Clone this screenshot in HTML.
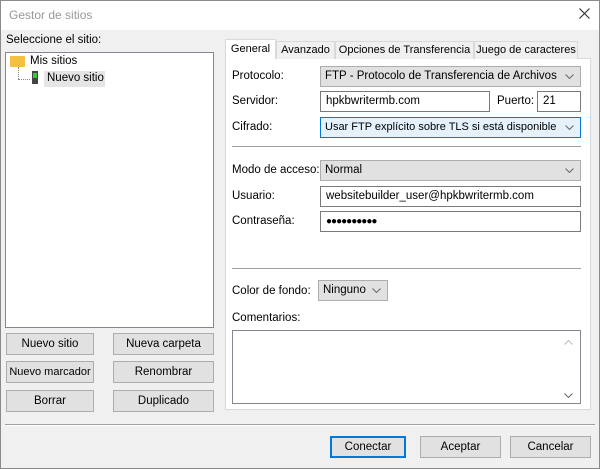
<!DOCTYPE html>
<html><head><meta charset="utf-8"><style>
*{box-sizing:border-box;margin:0;padding:0}
body{width:600px;height:469px;background:#fff;font-family:"Liberation Sans",sans-serif;font-size:11.5px;color:#000;position:relative;overflow:hidden;white-space:nowrap}
.a{position:absolute}
.win{left:0;top:0;width:600px;height:469px;border:1px solid #8a8a8a;background:#f0f0f0}
.title{left:1px;top:1px;width:598px;height:29px;background:#fff}
.btn{position:absolute;background:#e1e1e1;border:1px solid #adadad;text-align:center;line-height:20px}
.sel{position:absolute;background:#e1e1e1;border:1px solid #adadad;padding-left:4px;line-height:19px}
.inp{position:absolute;background:#fff;border:1px solid #7a7a7a;padding-left:5px;line-height:19px}
.chev{position:absolute;right:6px;top:7px;width:9px;height:5px}
.tab{position:absolute;top:41px;height:18px;background:#f0f0f0;border:1px solid #d9d9d9;border-bottom:none;text-align:center;line-height:17px;font-size:11px;overflow:hidden}
.sep{position:absolute;height:2px;border-top:1px solid #a0a0a0;border-bottom:1px solid #fff}
</style></head><body>
<div class="a win"></div>
<div class="a title"></div>
<div class="a" style="left:9px;top:8px;color:#999;font-size:12px">Gestor de sitios</div>
<svg class="a" style="left:579px;top:8px" width="11" height="11"><path d="M0.5 0.5L10.5 10.5M10.5 0.5L0.5 10.5" stroke="#333" stroke-width="1.2"/></svg>

<div class="a" style="left:6px;top:34px">Seleccione el sitio:</div>
<div class="a" style="left:5px;top:52px;width:209px;height:276px;background:#fff;border:1px solid #828790"></div>
<div class="a" style="left:10px;top:56px;width:15px;height:11px;background:#f5c040;border-radius:1px"></div>
<div class="a" style="left:30px;top:55px">Mis sitios</div>
<div class="a" style="left:18px;top:67px;width:1px;height:12px;border-left:1px dotted #888"></div>
<div class="a" style="left:18px;top:79px;width:12px;border-top:1px dotted #888"></div>
<div class="a" style="left:32px;top:71px;width:6px;height:13px;background:#444"></div>
<div class="a" style="left:33px;top:73px;width:4px;height:5px;background:#3c3"></div>
<div class="a" style="left:44px;top:71px;width:61px;height:16px;background:#e5e5e5"></div>
<div class="a" style="left:47px;top:72px">Nuevo sitio</div>

<div class="btn" style="left:6px;top:333px;width:88px;height:22px">Nuevo sitio</div>
<div class="btn" style="left:113px;top:333px;width:101px;height:22px">Nueva carpeta</div>
<div class="btn" style="left:6px;top:361px;width:88px;height:22px;font-size:11px">Nuevo marcador</div>
<div class="btn" style="left:113px;top:361px;width:101px;height:22px">Renombrar</div>
<div class="btn" style="left:6px;top:390px;width:88px;height:22px">Borrar</div>
<div class="btn" style="left:113px;top:390px;width:101px;height:22px">Duplicado</div>

<div class="a" style="left:225px;top:58px;width:366px;height:352px;background:#fff;border:1px solid #d9d9d9"></div>
<div class="tab" style="left:225px;top:39px;width:51px;height:20px;background:#fff;line-height:19px">General</div>
<div class="tab" style="left:276px;width:59px">Avanzado</div>
<div class="tab" style="left:335px;width:139px">Opciones de Transferencia</div>
<div class="tab" style="left:474px;width:104px">Juego de caracteres</div>

<svg width="0" height="0" style="position:absolute"><defs><symbol id="cv" viewBox="0 0 9 5"><path d="M0.5 0.5L4.5 4.5L8.5 0.5" fill="none" stroke="#666"/></symbol></defs></svg>

<div class="a" style="left:232px;top:70px">Protocolo:</div>
<div class="sel" style="left:320px;top:66px;width:261px;height:21px">FTP - Protocolo de Transferencia de Archivos<svg class="chev"><use href="#cv"/></svg></div>
<div class="a" style="left:232px;top:95px">Servidor:</div>
<div class="inp" style="left:320px;top:91px;width:170px;height:21px">hpkbwritermb.com</div>
<div class="a" style="left:497px;top:95px">Puerto:</div>
<div class="inp" style="left:537px;top:91px;width:44px;height:21px">21</div>
<div class="a" style="left:232px;top:121px">Cifrado:</div>
<div class="sel" style="left:320px;top:117px;width:261px;height:21px;background:#e5f1fb;border-color:#0078d7;font-size:11px">Usar FTP explícito sobre TLS si está disponible<svg class="chev"><use href="#cv"/></svg></div>
<div class="sep" style="left:232px;top:146px;width:349px"></div>

<div class="a" style="left:232px;top:164px">Modo de acceso:</div>
<div class="sel" style="left:320px;top:160px;width:261px;height:21px">Normal<svg class="chev"><use href="#cv"/></svg></div>
<div class="a" style="left:232px;top:190px">Usuario:</div>
<div class="inp" style="left:320px;top:186px;width:261px;height:21px">websitebuilder_user@hpkbwritermb.com</div>
<div class="a" style="left:232px;top:215px">Contraseña:</div>
<div class="inp" style="left:320px;top:211px;width:261px;height:21px;font-size:10px;letter-spacing:-1px">●●●●●●●●●●</div>
<div class="sep" style="left:232px;top:268px;width:349px"></div>

<div class="a" style="left:232px;top:285px">Color de fondo:</div>
<div class="sel" style="left:318px;top:280px;width:70px;height:21px">Ninguno<svg class="chev"><use href="#cv"/></svg></div>
<div class="a" style="left:232px;top:312px">Comentarios:</div>
<div class="a" style="left:232px;top:330px;width:349px;height:74px;background:#fff;border:1px solid #828790"></div>
<svg class="a" style="left:564px;top:340px" width="9" height="5"><path d="M0.5 4.5L4.5 0.5L8.5 4.5" fill="none" stroke="#bbb"/></svg>
<svg class="a" style="left:564px;top:393px" width="9" height="5"><use href="#cv"/></svg>

<div class="sep" style="left:5px;top:424px;width:590px"></div>
<div class="btn" style="left:330px;top:436px;width:76px;height:22px;border:2px solid #0078d7;line-height:18px">Conectar</div>
<div class="btn" style="left:420px;top:436px;width:81px;height:22px">Aceptar</div>
<div class="btn" style="left:510px;top:436px;width:81px;height:22px">Cancelar</div>
</body></html>
